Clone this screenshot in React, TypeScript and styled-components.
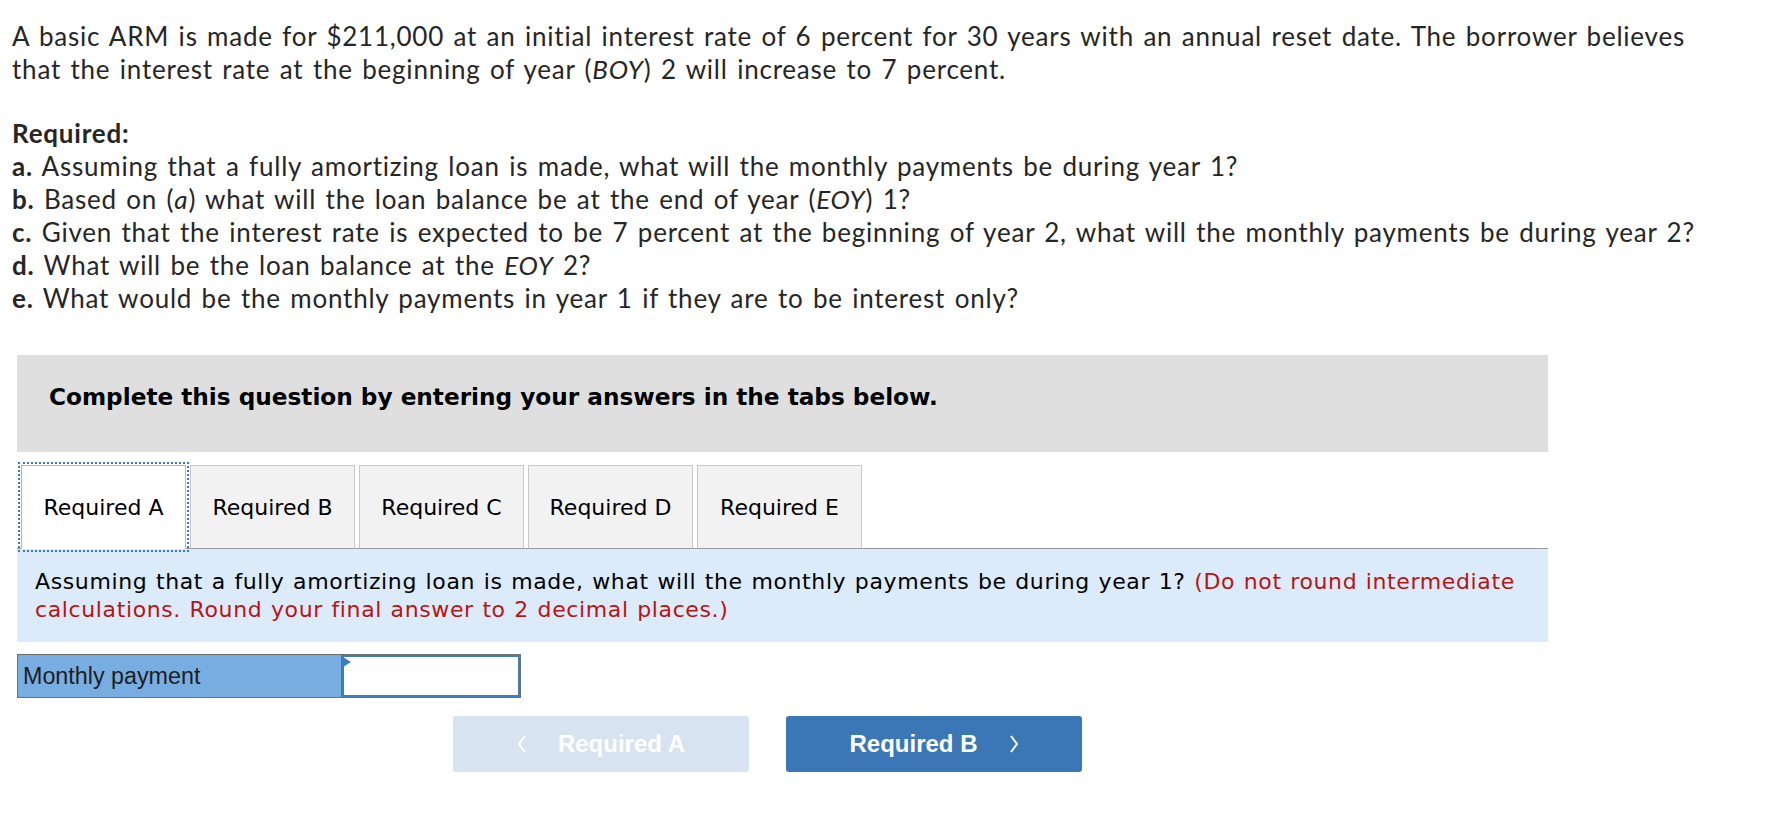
import React from 'react';
import styled, { createGlobalStyle } from 'styled-components';

const GlobalStyle = createGlobalStyle`
    body {
        margin: 0;
        background: #ffffff;
    }
`;

const Page = styled.div`
    padding: 20px 0 40px 12px;
`;

const Intro = styled.div`
    max-width: 1705px;
    font-family: Lato, 'Liberation Sans', sans-serif;
    font-size: 26px;
    line-height: 33px;
    letter-spacing: 0.78px;
    word-spacing: 2px;
    color: #262626;

    p {
        margin: 0;
    }

    b {
        font-weight: 700;
    }

    .gap {
        margin-top: 31px;
    }
`;

const Instructions = styled.div`
    margin: 40px 0 0 5px;
    width: 1531px;
    height: 97px;
    box-sizing: border-box;
    padding: 29px 0 0 32px;
    background: #dfdfdf;
    font-family: 'DejaVu Sans', Verdana, sans-serif;
    font-size: 23.2px;
    font-weight: 700;
    line-height: 26px;
    color: #000000;
`;

const Tabs = styled.div`
    display: flex;
    gap: 4px;
    margin: 13px 0 -1px 9px;
    position: relative;
    z-index: 1;
`;

const Tab = styled.div<{ $active?: boolean }>`
    width: 165px;
    height: 84px;
    box-sizing: border-box;
    display: flex;
    align-items: center;
    justify-content: center;
    border: 1px solid ${(p) => (p.$active ? '#b5b5b5' : '#c9c9c9')};
    border-bottom: ${(p) => (p.$active ? '1px solid #ffffff' : '1px solid #999999')};
    background: ${(p) => (p.$active ? '#ffffff' : '#f2f2f2')};
    outline: ${(p) => (p.$active ? '2px dotted #3a79c4' : 'none')};
    outline-offset: 1px;
    font-family: 'DejaVu Sans', Verdana, sans-serif;
    font-size: 22px;
    color: #000000;
`;

const Prompt = styled.div`
    margin-left: 5px;
    width: 1531px;
    box-sizing: border-box;
    border-top: 1px solid #999999;
    background: #dcebf9;
    padding: 19px 18px 18px 18px;
    font-family: 'DejaVu Sans', Verdana, sans-serif;
    font-size: 22px;
    line-height: 28px;
    letter-spacing: 0.62px;
    word-spacing: 1px;
    color: #000000;

    span {
        color: #b81414;
    }
`;

const AnswerRow = styled.div`
    display: flex;
    margin: 12px 0 0 5px;
    width: 504px;
    height: 44px;
    box-sizing: border-box;
    border: 1px solid #6e6e6e;
`;

const AnswerLabel = styled.div`
    width: 324px;
    background: #78ade2;
    border-right: 1px solid #6e6e6e;
    display: flex;
    align-items: center;
    padding-left: 5px;
    box-sizing: border-box;
    font-family: 'Liberation Sans', Arial, sans-serif;
    font-size: 23.3px;
    color: #1e1e1e;
`;

const AnswerInput = styled.div`
    position: relative;
    flex: 1;
    background: #ffffff;
    border: 2px solid #3f7cc2;

    &::before {
        content: '';
        position: absolute;
        left: -1px;
        top: 0;
        border-top: 5px solid transparent;
        border-bottom: 5px solid transparent;
        border-left: 8px solid #3f7cc2;
    }
`;

const NavRow = styled.div`
    display: flex;
    gap: 37px;
    margin: 18px 0 0 441px;
`;

const NavButton = styled.div<{ $disabled?: boolean }>`
    width: 296px;
    height: 56px;
    border-radius: 3px;
    display: flex;
    align-items: center;
    justify-content: center;
    gap: 31px;
    background: ${(p) => (p.$disabled ? '#d8e3f1' : '#3b77b7')};
    font-family: 'Liberation Sans', Arial, sans-serif;
    font-size: 24px;
    font-weight: 700;
    color: #ffffff;

    svg {
        display: block;
    }
`;

const Chevron = ({ dir }: { dir: 'left' | 'right' }) => (
    <svg width="10" height="20" viewBox="0 0 10 20">
        <polyline
            points={dir === 'left' ? '8,2 2,10 8,18' : '2,2 8,10 2,18'}
            fill="none"
            stroke="#ffffff"
            strokeWidth="2"
        />
    </svg>
);

const tabs = ['Required A', 'Required B', 'Required C', 'Required D', 'Required E'];

export default function App() {
    return (
        <Page>
            <GlobalStyle />
            <Intro>
                <p>
                    A basic ARM is made for $211,000 at an initial interest rate of 6 percent for 30 years with an annual
                    reset date. The borrower believes that the interest rate at the beginning of year (<i>BOY</i>) 2 will
                    increase to 7 percent.
                </p>
                <p className='gap'>
                    <b>Required:</b>
                </p>
                <p>
                    <b>a.</b> Assuming that a fully amortizing loan is made, what will the monthly payments be during year 1?
                </p>
                <p>
                    <b>b.</b> Based on (<i>a</i>) what will the loan balance be at the end of year (<i>EOY</i>) 1?
                </p>
                <p>
                    <b>c.</b> Given that the interest rate is expected to be 7 percent at the beginning of year 2, what will
                    the monthly payments be during year 2?
                </p>
                <p>
                    <b>d.</b> What will be the loan balance at the <i>EOY</i> 2?
                </p>
                <p>
                    <b>e.</b> What would be the monthly payments in year 1 if they are to be interest only?
                </p>
            </Intro>

            <Instructions>Complete this question by entering your answers in the tabs below.</Instructions>

            <Tabs>
                {tabs.map((t, i) => (
                    <Tab key={t} $active={i === 0}>
                        {t}
                    </Tab>
                ))}
            </Tabs>

            <Prompt>
                Assuming that a fully amortizing loan is made, what will the monthly payments be during year 1?{' '}
                <span>(Do not round intermediate calculations. Round your final answer to 2 decimal places.)</span>
            </Prompt>

            <AnswerRow>
                <AnswerLabel>Monthly payment</AnswerLabel>
                <AnswerInput />
            </AnswerRow>

            <NavRow>
                <NavButton $disabled>
                    <Chevron dir='left' />
                    Required A
                </NavButton>
                <NavButton>
                    Required B
                    <Chevron dir='right' />
                </NavButton>
            </NavRow>
        </Page>
    );
}
